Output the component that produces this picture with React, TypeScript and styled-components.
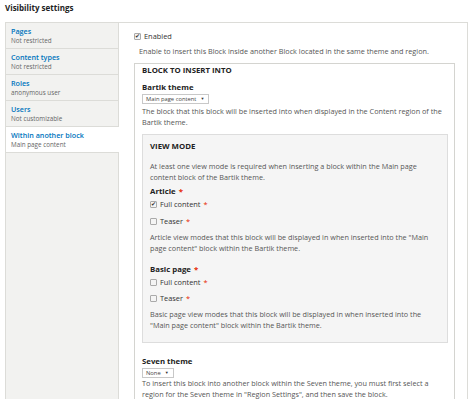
import React from 'react';
import styled, { createGlobalStyle } from 'styled-components';

const GlobalStyle = createGlobalStyle`
  body {
    margin: 0;
    background: #fff;
    font-family: "Open Sans", "Noto Sans", sans-serif;
    color: #222;
  }
`;

const Page = styled.div`
  padding: 0 6px 0 5px;
  height: 399px;
  overflow: hidden;
`;

const Title = styled.h2`
  margin: 0;
  height: 22px;
  line-height: 16px;
  font-size: 8px;
  font-weight: 700;
  color: #222;
`;

const Tabs = styled.div`
  display: flex;
  align-items: stretch;
  min-height: 380px;
`;

const TabList = styled.ul`
  list-style: none;
  margin: 0;
  padding: 0;
  width: 112px;
  flex: none;
  background: #f2f2f0;
  border: 1px solid #dcdcd8;
  border-right: 0;
`;

const Tab = styled.li<{ $active?: boolean }>`
  height: 26px;
  padding: 3px 0 0 5px;
  box-sizing: border-box;
  border-bottom: 1px solid #dcdcd8;
  background: ${p => (p.$active ? '#fff' : 'transparent')};
  margin-right: ${p => (p.$active ? '-1px' : '0')};
  position: relative;
`;

const TabTitle = styled.a`
  display: block;
  font-size: 7.2px;
  line-height: 10px;
  font-weight: 600;
  color: #0074bd;
  text-decoration: none;
`;

const TabSummary = styled.div`
  font-size: 6.3px;
  line-height: 9px;
  color: #666;
`;

const Panel = styled.div`
  flex: 1;
  border: 1px solid #dcdcd8;
  background: #fff;
  padding: 8px 12px 0 15px;
`;

const CheckRow = styled.label`
  display: flex;
  align-items: center;
  gap: 3px;
  font-size: 7.4px;
  line-height: 11px;
  color: #333;
`;

const Box = styled.span<{ $checked?: boolean }>`
  width: 5px;
  height: 5px;
  border: 1px solid #aaa;
  border-radius: 1px;
  background: #f4f4f4;
  position: relative;
  flex: none;
  &::after {
    content: ${p => (p.$checked ? "'✔'" : 'none')};
    position: absolute;
    left: 0px;
    top: -3px;
    font-size: 6px;
    line-height: 10px;
    color: #333;
  }
`;

const Req = styled.span`
  color: #e62600;
  margin-left: 3px;
`;

const Desc = styled.div<{ $indent?: number; $gap?: number }>`
  font-size: 7.25px;
  line-height: 11px;
  color: #555;
  padding-left: ${p => p.$indent ?? 0}px;
  margin-top: ${p => p.$gap ?? 0}px;
`;

const Fieldset = styled.div`
  margin-top: 6px;
  border: 1px solid #d4d4d0;
  border-bottom: 0;
  padding: 0 4px 0 7px;
  height: 400px;
`;

const Legend = styled.div`
  font-size: 7.8px;
  font-weight: 700;
  line-height: 12px;
  color: #222;
  text-transform: uppercase;
`;

const Label = styled.div<{ $gap?: number }>`
  font-size: 7.8px;
  font-weight: 700;
  line-height: 12px;
  color: #222;
  margin-top: ${p => p.$gap ?? 0}px;
`;

const SelectWrap = styled.div`
  display: flex;
  align-items: center;
  height: 11px;
`;

const Select = styled.span`
  display: inline-flex;
  align-items: center;
  gap: 4px;
  height: 8px;
  padding: 0 4px 0 3px;
  border: 1px solid #c8c8c8;
  background: #fff;
  font-size: 5.8px;
  color: #444;
  &::after {
    content: '▼';
    font-size: 4px;
    color: #333;
  }
`;

const ViewMode = styled.div`
  margin-top: 6px;
  margin-right: 2px;
  background: #f5f5f5;
  border: 1px solid #ddd;
  padding: 5px 8px 11px 7px;
`;

const Option = styled(CheckRow)<{ $gap: number }>`
  margin-top: ${p => p.$gap}px;
`;

const App: React.FC = () => {
  const tabs = [
    { title: 'Pages', summary: 'Not restricted' },
    { title: 'Content types', summary: 'Not restricted' },
    { title: 'Roles', summary: 'anonymous user' },
    { title: 'Users', summary: 'Not customizable' },
    { title: 'Within another block', summary: 'Main page content', active: true },
  ];

  return (
    <>
      <GlobalStyle />
      <Page>
        <Title>Visibility settings</Title>
        <Tabs>
          <TabList>
            {tabs.map(t => (
              <Tab key={t.title} $active={t.active}>
                <TabTitle href="#">{t.title}</TabTitle>
                <TabSummary>{t.summary}</TabSummary>
              </Tab>
            ))}
          </TabList>
          <Panel>
            <CheckRow>
              <Box $checked />
              <span>Enabled</span>
            </CheckRow>
            <Desc $indent={5} $gap={4}>
              Enable to insert this Block inside another Block located in the same theme and region.
            </Desc>
            <Fieldset>
              <Legend>Block to insert into</Legend>
              <Label $gap={5}>Bartik theme</Label>
              <SelectWrap>
                <Select>Main page content</Select>
              </SelectWrap>
              <Desc $gap={2}>
                The block that this block will be inserted into when displayed in the Content region of the
                Bartik theme.
              </Desc>
              <ViewMode>
                <Legend>View mode</Legend>
                <Desc $gap={9}>
                  At least one view mode is required when inserting a block within the Main page content
                  block of the Bartik theme.
                </Desc>
                <Label $gap={2}>
                  Article<Req>*</Req>
                </Label>
                <Option $gap={2}>
                  <Box $checked />
                  <span>
                    Full content<Req>*</Req>
                  </span>
                </Option>
                <Option $gap={6}>
                  <Box />
                  <span>
                    Teaser<Req>*</Req>
                  </span>
                </Option>
                <Desc $gap={5}>
                  Article view modes that this block will be displayed in when inserted into the "Main
                  page content" block within the Bartik theme.
                </Desc>
                <Label $gap={9}>
                  Basic page<Req>*</Req>
                </Label>
                <Option $gap={2}>
                  <Box />
                  <span>
                    Full content<Req>*</Req>
                  </span>
                </Option>
                <Option $gap={5}>
                  <Box />
                  <span>
                    Teaser<Req>*</Req>
                  </span>
                </Option>
                <Desc $gap={5}>
                  Basic page view modes that this block will be displayed in when inserted into the
                  "Main page content" block within the Bartik theme.
                </Desc>
              </ViewMode>
              <Label $gap={12}>Seven theme</Label>
              <SelectWrap>
                <Select>None</Select>
              </SelectWrap>
              <Desc>
                To insert this block into another block within the Seven theme, you must first select a
                region for the Seven theme in "Region Settings", and then save the block.
              </Desc>
            </Fieldset>
          </Panel>
        </Tabs>
      </Page>
    </>
  );
};

export default App;
